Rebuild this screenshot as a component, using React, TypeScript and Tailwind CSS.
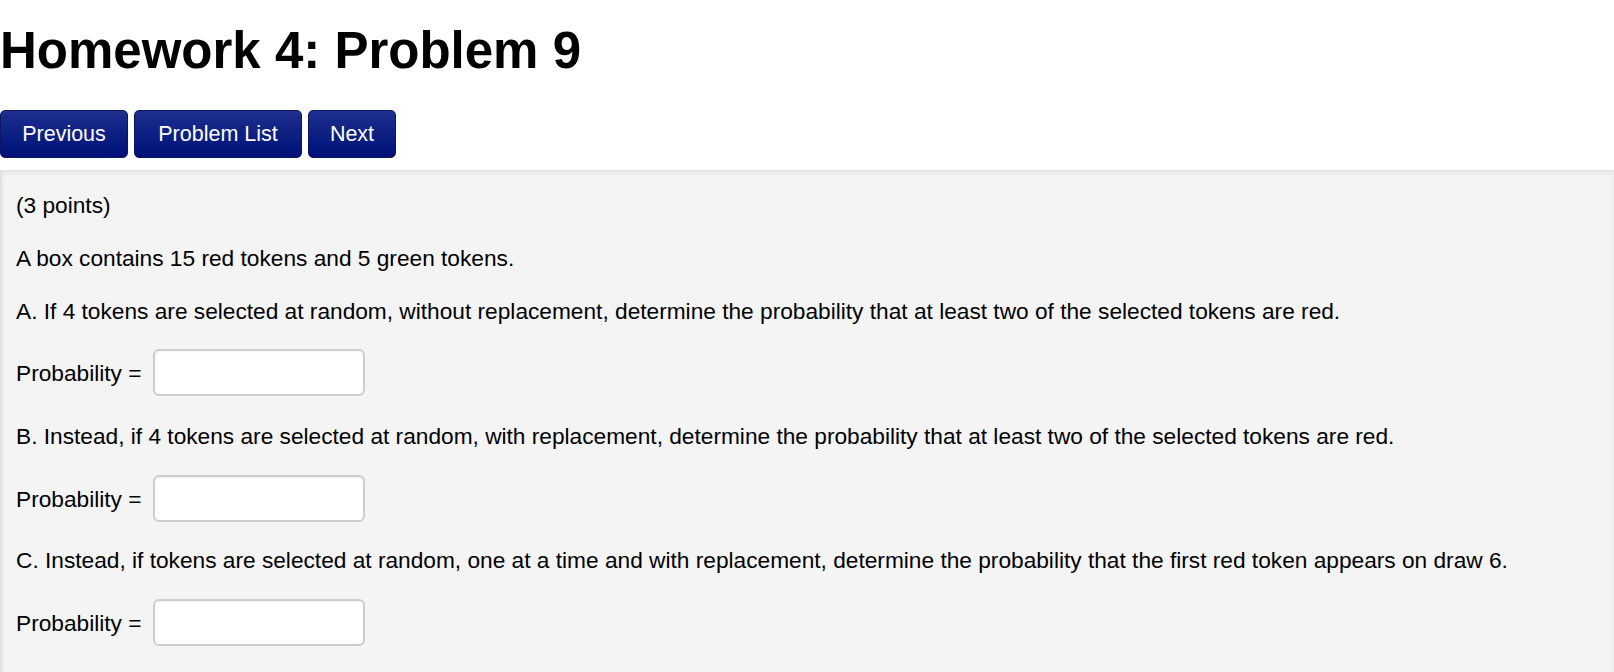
import React from 'react'

const navButtons = [
  { label: 'Previous', width: 'w-[128px]' },
  { label: 'Problem List', width: 'w-[168px]' },
  { label: 'Next', width: 'w-[88px]' },
]

function AnswerRow({ className }: { className: string }) {
  return (
    <div className={`flex items-center ${className}`}>
      <span className="leading-[28px]">Probability =</span>
      <input
        type="text"
        className="ml-[12px] h-[47px] w-[212px] rounded-[6px] border-2 border-[#cdcdcd] bg-white shadow-[inset_0_1px_2px_rgba(0,0,0,0.06)] outline-none"
      />
    </div>
  )
}

export default function App() {
  return (
    <div className="min-h-[672px] bg-white text-black font-['Liberation_Sans',Arial,sans-serif]">
      <h1 className="pt-[26px] text-[51px] leading-[50px] font-bold">Homework 4: Problem 9</h1>

      <div className="mt-[34px] flex gap-[6px]">
        {navButtons.map((b) => (
          <button
            key={b.label}
            className={`${b.width} h-[48px] rounded-[5px] border border-[#0b185f] bg-linear-to-b from-[#1d2e8e] to-[#000f78] text-[21.5px] text-white`}
          >
            {b.label}
          </button>
        ))}
      </div>

      <div className="mt-[12px] min-h-[502px] border-l-2 border-t border-[#e2e2e2] bg-[#f4f4f4] pl-[14px] pt-[20px] text-[22.7px] leading-[28px] shadow-[inset_0_2px_4px_rgba(0,0,0,0.07)]">
        <p>(3 points)</p>
        <p className="mt-[25px]">A box contains 15 red tokens and 5 green tokens.</p>
        <p className="mt-[25px]">
          A. If 4 tokens are selected at random, without replacement, determine the probability that at least two of the selected tokens are red.
        </p>
        <AnswerRow className="mt-[24px]" />
        <p className="mt-[26px]">
          B. Instead, if 4 tokens are selected at random, with replacement, determine the probability that at least two of the selected tokens are red.
        </p>
        <AnswerRow className="mt-[25px]" />
        <p className="mt-[24px]">
          C. Instead, if tokens are selected at random, one at a time and with replacement, determine the probability that the first red token appears on draw 6.
        </p>
        <AnswerRow className="mt-[25px]" />
      </div>
    </div>
  )
}
